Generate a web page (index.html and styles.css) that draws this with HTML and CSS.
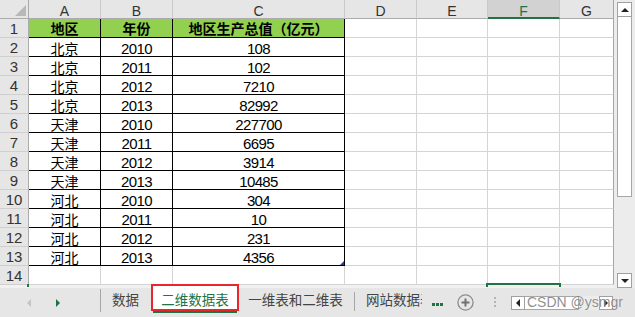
FILE: index.html
```html
<!DOCTYPE html>
<html lang="zh">
<head>
<meta charset="utf-8">
<title>二维数据表</title>
<link rel="stylesheet" href="styles.css">
</head>
<body>
<div class="app">
  <div class="top">
    <div class="sheetwrap">
      <div class="grid">
        <div class="ch corner"><span class="tri"></span></div>
        <div class="ch">A</div><div class="ch">B</div><div class="ch">C</div><div class="ch">D</div><div class="ch">E</div><div class="ch sel">F</div><div class="ch g">G</div>

        <div class="rh">1</div><div class="c t hd">地区</div><div class="c t hd">年份</div><div class="c t hd">地区生产总值（亿元）</div><div class="c"></div><div class="c"></div><div class="c"></div><div class="c g"></div>
        <div class="rh">2</div><div class="c t">北京</div><div class="c t n">2010</div><div class="c t n">108</div><div class="c"></div><div class="c"></div><div class="c"></div><div class="c g"></div>
        <div class="rh">3</div><div class="c t">北京</div><div class="c t n">2011</div><div class="c t n">102</div><div class="c"></div><div class="c"></div><div class="c"></div><div class="c g"></div>
        <div class="rh">4</div><div class="c t">北京</div><div class="c t n">2012</div><div class="c t n">7210</div><div class="c"></div><div class="c"></div><div class="c"></div><div class="c g"></div>
        <div class="rh">5</div><div class="c t">北京</div><div class="c t n">2013</div><div class="c t n">82992</div><div class="c"></div><div class="c"></div><div class="c"></div><div class="c g"></div>
        <div class="rh">6</div><div class="c t">天津</div><div class="c t n">2010</div><div class="c t n">227700</div><div class="c"></div><div class="c"></div><div class="c"></div><div class="c g"></div>
        <div class="rh">7</div><div class="c t">天津</div><div class="c t n">2011</div><div class="c t n">6695</div><div class="c"></div><div class="c"></div><div class="c"></div><div class="c g"></div>
        <div class="rh">8</div><div class="c t">天津</div><div class="c t n">2012</div><div class="c t n">3914</div><div class="c"></div><div class="c"></div><div class="c"></div><div class="c g"></div>
        <div class="rh">9</div><div class="c t">天津</div><div class="c t n">2013</div><div class="c t n">10485</div><div class="c"></div><div class="c"></div><div class="c"></div><div class="c g"></div>
        <div class="rh">10</div><div class="c t">河北</div><div class="c t n">2010</div><div class="c t n">304</div><div class="c"></div><div class="c"></div><div class="c"></div><div class="c g"></div>
        <div class="rh">11</div><div class="c t">河北</div><div class="c t n">2011</div><div class="c t n">10</div><div class="c"></div><div class="c"></div><div class="c"></div><div class="c g"></div>
        <div class="rh">12</div><div class="c t">河北</div><div class="c t n">2012</div><div class="c t n">231</div><div class="c"></div><div class="c"></div><div class="c"></div><div class="c g"></div>
        <div class="rh">13</div><div class="c t">河北</div><div class="c t n">2013</div><div class="c t n last">4356<span class="handle"></span></div><div class="c"></div><div class="c"></div><div class="c"></div><div class="c g"></div>
        <div class="rh">14</div><div class="c"></div><div class="c"></div><div class="c"></div><div class="c"></div><div class="c"></div><div class="c"></div><div class="c g"></div>
      </div>
      <div class="band"></div>
      <div class="selbox"></div>
      <div class="rowsel"></div>
    </div>
    <div class="vscroll">
      <div class="vbtn"><span class="up"></span></div>
      <div class="vthumb"></div>
      <div class="vtrack"></div>
      <div class="vbtn"><span class="down"></span></div>
    </div>
  </div>
  <div class="tabbar">
    <div class="nav"><span class="arr-l dim"></span><span class="arr-r green"></span></div>
    <div class="sep1"></div>
    <div class="tab w49">数据</div>
    <div class="tab active">二维数据表</div>
    <div class="tab w117">一维表和二维表</div>
    <div class="sep2"></div>
    <div class="tab cut">网站数据表</div>
    <div class="more"><i></i><i></i><i></i></div>
    <div class="plus">
      <svg width="17" height="17" viewBox="0 0 17 17"><circle cx="8.5" cy="8.5" r="7.6" fill="none" stroke="#8c8c8c" stroke-width="1.3"/><path d="M8.5 4.5v8M4.5 8.5h8" stroke="#707070" stroke-width="2"/></svg>
    </div>
    <div class="dotsep"></div>
    <div class="hscroll">
      <div class="hbtn"><span class="arr-l dark"></span></div>
      <div class="hthumb"></div>
      <div class="htrack"></div>
      <div class="hbtn"><span class="arr-r dark"></span></div>
    </div>
    <div class="watermark">CSDN @ysmgr</div>
  </div>
</div>
</body>
</html>
```

FILE: styles.css
```css
* { box-sizing: border-box; margin: 0; padding: 0; }
html, body { width: 635px; height: 317px; overflow: hidden; }
body {
  background: #e6e6e6;
  font-family: "Liberation Sans", "Noto Sans CJK SC", sans-serif;
  color: #000;
}
.app { display: flex; flex-direction: column; height: 317px; }
.top { display: flex; height: 288px; }
.sheetwrap {
  width: 614px; height: 288px;
  display: flex; flex-direction: column;
  position: relative; overflow: hidden;
}
.grid {
  display: grid;
  grid-template-columns: 29px 72px 72px 172px 72px 71px 72px 54px;
  grid-template-rows: repeat(15, 19px);
  height: 285px;
  background: #fff;
}
.band { height: 3px; background: #f1f1f1; }

/* headers */
.ch {
  background: #e6e6e6;
  border-right: 1px solid #cacaca;
  border-bottom: 1px solid #ababab;
  font-size: 14px; line-height: 18px; padding-top: 2px;
  color: #333; text-align: center;
}
.ch.corner { position: relative; border-right-color: #ababab; }
.tri {
  position: absolute; left: 15px; top: 5px; width: 11px; height: 11px;
  background: #b8b8b8; clip-path: polygon(100% 0, 100% 100%, 0 100%);
}
.ch.sel { background: #d2d2d2; border-bottom: 2px solid #217346; color: #217346; }
.ch.g, .c.g { border-right-color: #a6a6a6; }
.rh {
  background: #e6e6e6;
  border-right: 1px solid #ababab;
  border-bottom: 1px solid #cfcfcf;
  font-size: 15px; line-height: 18px; padding-top: 1px;
  color: #333; text-align: center;
}

/* cells */
.c {
  border-right: 1px solid #d4d4d4;
  border-bottom: 1px solid #d4d4d4;
  font-size: 14px; line-height: 18px; padding-top: 2px;
  text-align: center; white-space: nowrap; overflow: hidden;
}
.c.t { border-right-color: #000; border-bottom-color: #000; }
.c.hd { background: #92d050; font-weight: bold; padding-top: 1px; }
.c.n { font-size: 15px; letter-spacing: -0.6px; }
.c.last { position: relative; }
.handle {
  position: absolute; right: 0; bottom: 0; width: 4px; height: 4px;
  background: #2f3f8f; clip-path: polygon(100% 0, 100% 100%, 0 100%);
}

/* selection of F15 (overlay) */
.selbox {
  position: absolute; left: 486px; top: 283px; width: 75px; height: 4px;
  border: 2px solid #217346; border-bottom: none;
}
.rowsel { position: absolute; left: 27px; top: 284px; width: 2px; height: 3px; background: #217346; }

/* vertical scrollbar */
.vscroll {
  width: 21px; height: 288px; background: #ececec;
  padding: 2px 3px 0 3px;
  display: flex; flex-direction: column;
}
.vbtn {
  height: 15px; background: #fff; border: 1px solid #a0a0a0;
  display: flex; align-items: center; justify-content: center;
}
.vthumb { height: 180px; background: #fff; border: 1px solid #a6a6a6; border-top: none; }
.vtrack { flex: 1; }
.up { width: 0; height: 0; border-left: 4px solid transparent; border-right: 4px solid transparent; border-bottom: 4px solid #222; }
.down { width: 0; height: 0; border-left: 4px solid transparent; border-right: 4px solid transparent; border-top: 4px solid #222; }

/* tab bar */
.tabbar {
  position: relative;
  height: 29px; display: flex; align-items: flex-start;
  background: #e6e6e6;
}
.nav { width: 100px; height: 29px; display: flex; align-items: center; padding-left: 27px; gap: 25px; }
.arr-l { width: 0; height: 0; border-top: 4px solid transparent; border-bottom: 4px solid transparent; border-right: 4px solid #222; }
.arr-r { width: 0; height: 0; border-top: 4px solid transparent; border-bottom: 4px solid transparent; border-left: 4px solid #222; }
.arr-l.dim { border-right-color: #c4c4c4; }
.arr-r.green { border-left-color: #217346; }
.sep1 { width: 1px; height: 23px; margin-top: 1px; background: #a6a6a6; }
.sep2 { width: 1px; height: 19px; margin-top: 4px; background: #a6a6a6; }
.tab {
  height: 25px; line-height: 25px; font-size: 13.5px; color: #444;
  text-align: center; white-space: nowrap;
}
.tab.w49 { width: 49px; }
.tab.w117 { width: 117px; }
.tab.cut { width: 67px; overflow: hidden; text-align: left; padding-left: 11px; }
.tab.active {
  position: relative;
  width: 84px; height: 27px; margin-top: -2px; margin-left: 3px;
  background: #fff; color: #217346;
  border-bottom: 2px solid #217346;
  padding-top: 4px; line-height: 21px;
}
.tab.active::after {
  content: ""; position: absolute; left: -2px; right: -2px; top: -2px; bottom: 0;
  border: 2px solid #e8262b;
}
.more { display: flex; gap: 1px; margin-left: 10px; margin-top: 15px; }
.more i { width: 3px; height: 3px; background: #217346; }
.plus { width: 17px; height: 17px; margin-left: 14px; margin-top: 6px; }
.plus svg { display: block; }
.dotsep {
  width: 2px; height: 12px; margin-left: 20px; margin-top: 9px;
  background: repeating-linear-gradient(#b4b4b4 0 2px, transparent 2px 4px);
}
.hscroll { display: flex; margin-left: 15px; margin-top: 8px; height: 14px; }
.hbtn {
  width: 14px; height: 14px; background: #fff; border: 1px solid #a0a0a0;
  display: flex; align-items: center; justify-content: center;
}
.hthumb { width: 54px; height: 14px; background: #fff; border: 1px solid #a6a6a6; border-left: none; }
.htrack { width: 20px; height: 14px; background: #ececec; }
.watermark {
  position: absolute; left: 527px; top: 6px;
  font-size: 14px; line-height: 16px; white-space: nowrap;
  color: rgba(105, 105, 105, 0.75);
  text-shadow: 0 0 1px rgba(255, 255, 255, 0.8);
}
```
